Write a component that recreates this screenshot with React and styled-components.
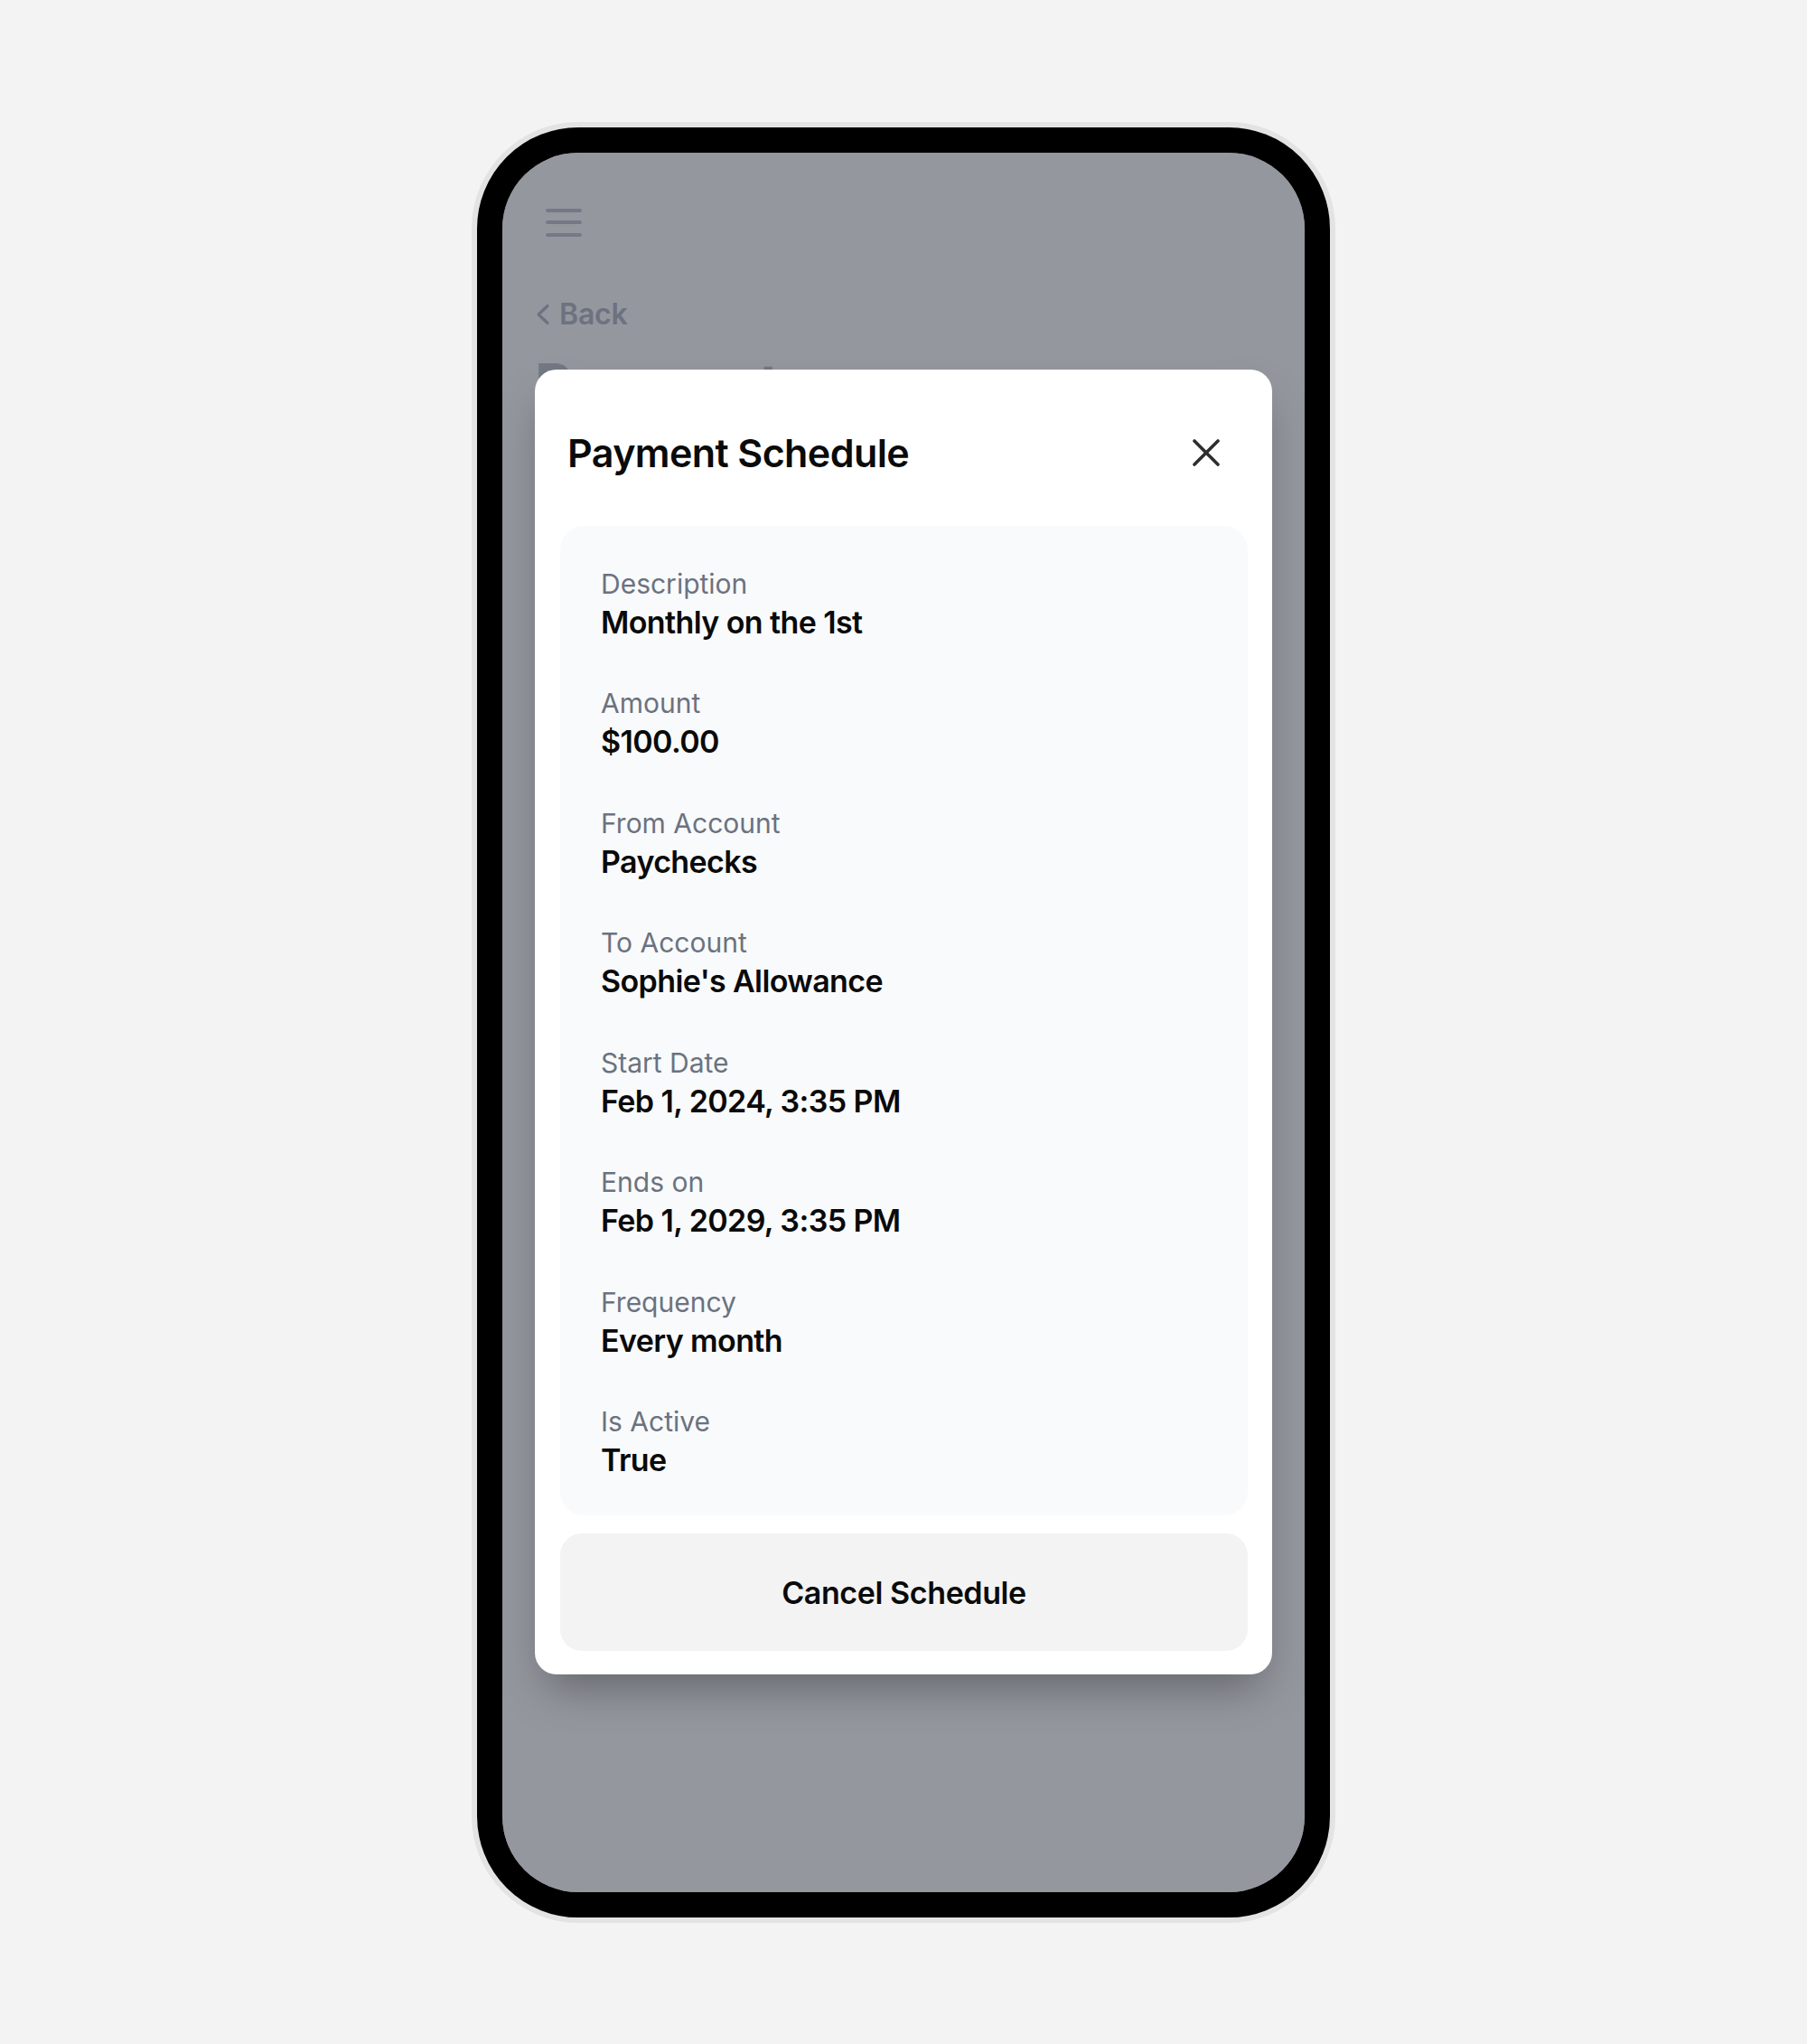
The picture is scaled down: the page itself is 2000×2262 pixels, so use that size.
import React from "react";
import styled, { createGlobalStyle } from "styled-components";

const GlobalStyle = createGlobalStyle`
  html, body {
    margin: 0;
    padding: 0;
    background: #f3f3f3;
  }
  body {
    font-family: Inter, "Noto Sans", "Liberation Sans", sans-serif;
    -webkit-font-smoothing: antialiased;
  }
  * { box-sizing: border-box; }
`;

const Stage = styled.div`
  width: 2000px;
  height: 2262px;
  display: flex;
  align-items: center;
  justify-content: center;
`;

const Phone = styled.div`
  width: 944px;
  height: 1981px;
  border: 28px solid #000;
  border-radius: 112px;
  box-shadow: 0 0 0 6px #e3e3e3;
  background: #000;
`;

const Screen = styled.div`
  position: relative;
  width: 100%;
  height: 100%;
  border-radius: 84px;
  overflow: hidden;
  background: #fff;
`;

const Page = styled.div`
  display: flex;
  flex-direction: column;
  padding: 60px 37px 0;
`;

const MenuButton = styled.div`
  display: flex;
  flex-direction: column;
  gap: 9.5px;
  width: 40px;
  margin-left: 11px;
  padding-top: 2px;
`;

const MenuLine = styled.span`
  display: block;
  height: 4px;
  border-radius: 2px;
  background: #c6c9d2;
`;

const BackLink = styled.div`
  display: flex;
  align-items: center;
  gap: 10px;
  margin-top: 66px;
  font-size: 32px;
  font-weight: 600;
  line-height: 40px;
  color: #b8bcc8;
  letter-spacing: -0.2px;
`;

const PageTitle = styled.h1`
  margin: 20px 0 0 -1px;
  font-size: 64px;
  line-height: 76px;
  font-weight: 700;
  color: #c3c6cf;
  letter-spacing: -0.6px;
`;

const BackCard = styled.div`
  margin-top: 160px;
  height: 130px;
  border-radius: 22px;
  background: #fbfbfc;
  border: 1px solid #eceef1;
`;

const Overlay = styled.div`
  position: absolute;
  inset: 0;
  background: rgba(17, 24, 39, 0.45);
  display: flex;
  align-items: center;
  justify-content: center;
`;

const Modal = styled.div`
  width: 816px;
  background: #fff;
  border-radius: 24px;
  padding: 0 27px 26px 28px;
  display: flex;
  flex-direction: column;
  box-shadow: 0 25px 50px -12px rgba(0, 0, 0, 0.34);
`;

const Header = styled.div`
  height: 173px;
  padding: 11px 30px 0 8px;
  display: flex;
  align-items: center;
  justify-content: space-between;
`;

const Title = styled.h2`
  margin: 0;
  font-size: 43px;
  line-height: 52px;
  font-weight: 600;
  color: #0a0a0a;
  letter-spacing: -0.6px;
`;

const CloseButton = styled.button`
  border: 0;
  padding: 0;
  background: none;
  width: 32px;
  height: 32px;
  display: flex;
  align-items: center;
  justify-content: center;
  color: #2e2e2e;
`;

const DetailCard = styled.div`
  background: #f9fafb;
  border-radius: 26px;
  padding: 44px 46px 38px 45px;
  display: flex;
  flex-direction: column;
  gap: 46.5px;
`;

const Field = styled.div`
  display: flex;
  flex-direction: column;
`;

const Label = styled.span`
  font-size: 30px;
  line-height: 40px;
  font-weight: 400;
  color: #6b7280;
  letter-spacing: 0;
`;

const Value = styled.span`
  font-size: 34px;
  line-height: 46px;
  font-weight: 600;
  color: #0a0a0a;
  letter-spacing: -0.6px;
`;

const ActionButton = styled.button`
  margin-top: 20px;
  height: 130px;
  border: 0;
  border-radius: 24px;
  background: #f3f3f3;
  font-family: inherit;
  font-size: 34px;
  font-weight: 600;
  color: #0a0a0a;
  letter-spacing: -0.4px;
`;

const details = [
  ["Description", "Monthly on the 1st"],
  ["Amount", "$100.00"],
  ["From Account", "Paychecks"],
  ["To Account", "Sophie's Allowance"],
  ["Start Date", "Feb 1, 2024, 3:35 PM"],
  ["Ends on", "Feb 1, 2029, 3:35 PM"],
  ["Frequency", "Every month"],
  ["Is Active", "True"],
];

export default function App() {
  return (
    <>
      <GlobalStyle />
      <Stage>
        <Phone>
          <Screen>
            <Page>
              <MenuButton>
                <MenuLine />
                <MenuLine />
                <MenuLine />
              </MenuButton>
              <BackLink>
                <svg width="16" height="24" viewBox="0 0 16 24" fill="none">
                  <path d="M13 2.5 L3 12 L13 21.5" stroke="currentColor" strokeWidth="3.2" strokeLinecap="round" strokeLinejoin="round" />
                </svg>
                Back
              </BackLink>
              <PageTitle>Payments</PageTitle>
              <BackCard />
            </Page>
            <Overlay>
              <Modal>
                <Header>
                  <Title>Payment Schedule</Title>
                  <CloseButton aria-label="Close">
                    <svg width="32" height="32" viewBox="0 0 32 32" fill="none">
                      <path d="M3 3 L29 29 M29 3 L3 29" stroke="currentColor" strokeWidth="3.6" strokeLinecap="round" />
                    </svg>
                  </CloseButton>
                </Header>
                <DetailCard>
                  {details.map(([label, value]) => (
                    <Field key={label}>
                      <Label>{label}</Label>
                      <Value>{value}</Value>
                    </Field>
                  ))}
                </DetailCard>
                <ActionButton>Cancel Schedule</ActionButton>
              </Modal>
            </Overlay>
          </Screen>
        </Phone>
      </Stage>
    </>
  );
}
